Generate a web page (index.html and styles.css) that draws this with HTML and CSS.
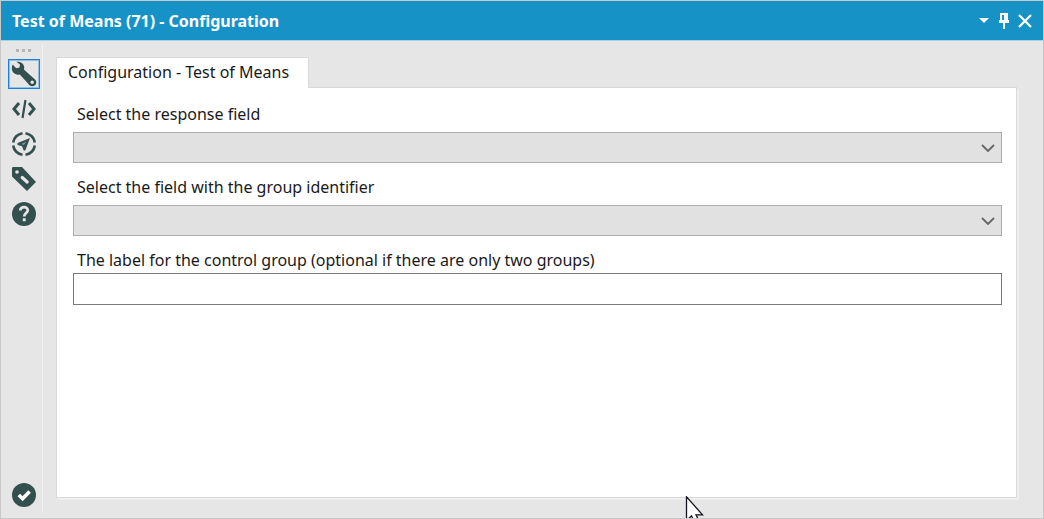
FILE: index.html
```html
<!DOCTYPE html>
<html lang="en">
<head>
<meta charset="utf-8">
<title>Test of Means (71) - Configuration</title>
<link rel="stylesheet" href="styles.css">
</head>
<body>
<div class="window">
  <header class="titlebar">
    <h1 class="title">Test of Means (71) - Configuration</h1>
    <button class="title-button" aria-label="Window options"><svg width="16" height="20" viewBox="0 0 16 20"><path d="M3 7h10l-5 5z" fill="#fff"/></svg></button>
    <button class="title-button title-pin" aria-label="Pin"><svg width="16" height="20" viewBox="0 0 16 20"><path d="M4 2h8v7h1v3H9v6H7v-6H3V9h1z" fill="#fff"/><path d="M6 4h2v5H6z" fill="#1792c7"/></svg></button>
    <button class="title-button title-close" aria-label="Close"><svg width="16" height="20" viewBox="0 0 16 20"><path d="M2 4l12 12M14 4L2 16" stroke="#fff" stroke-width="2.2" fill="none"/></svg></button>
  </header>
  <div class="content">
    <nav class="rail" aria-label="Configuration sections">
      <div class="grip"><i></i><i></i><i></i></div>
      <button class="tool tool-active" aria-label="Configuration"><svg width="26" height="26" viewBox="0 0 26 26"><path d="M1.600 3.400 5.200 7.200 8.500 6.500 9 3.600 5.400.7C9.500.2 12.900 2.500 13.200 6c.1 1 0 1.800-.3 2.600l9.700 8.700c1.700 1.300 2.800 2.400 2.700 4.200-.1 2.300-1.900 3.800-4.100 3.800-1.800 0-2.900-1-4.200-2.700L8.800 13.400C4.500 14.500.9 11.500.8 7.600c0-1.500.3-2.900.8-4.200z" fill="#33504f"/><circle cx="21.200" cy="21.200" r="1.700" fill="#e6e6e6"/></svg></button>
      <button class="tool" aria-label="XML view"><svg width="26" height="26" viewBox="0 0 26 26"><path d="M8 7 3 13l5 6M18 7l5 6-5 6" fill="none" stroke="#33504f" stroke-width="3"/><path d="M14.500 4 11.500 22" stroke="#33504f" stroke-width="2.200"/></svg></button>
      <button class="tool" aria-label="Navigation"><svg width="26" height="26" viewBox="0 0 26 26"><g fill="none" stroke="#33504f" stroke-width="2.600"><path d="M14.500 2.200A10.800 10.800 0 0 1 23.800 11.500M23.800 14.500A10.800 10.800 0 0 1 14.500 23.800M11.500 23.800A10.800 10.800 0 0 1 2.200 14.500M2.200 11.500A10.800 10.800 0 0 1 11.500 2.200"/></g><path d="M19 7 6.500 12v2l4.500 1.200 1.700 4.300h1.600z" fill="#33504f"/><path d="M15.500 10.500 10.500 13l2.300 1z" fill="#e6e6e6" opacity=".5"/></svg></button>
      <button class="tool" aria-label="Annotation"><svg width="26" height="26" viewBox="0 0 26 26"><path d="M1 2.200Q1 1 2.200 1H11L25 16 16 25 1 10.500z" fill="#33504f"/><circle cx="6" cy="6" r="1.800" fill="#e6e6e6"/><path d="m11.200 11.500 5 4.500" stroke="#e6e6e6" stroke-width="3.200" stroke-linecap="round"/></svg></button>
      <button class="tool" aria-label="Help"><svg width="26" height="26" viewBox="0 0 26 26"><circle cx="13" cy="13" r="12" fill="#33504f"/><path d="M9.300 9.400C9.300 5 17 5 16.700 9.500c-.2 2.600-3.500 2.600-3.500 6" fill="none" stroke="#e6e6e6" stroke-width="2.800"/><path d="M11.800 17.300h2.900v2.900h-2.900z" fill="#e6e6e6"/></svg></button>
      <button class="tool tool-apply" aria-label="Apply"><svg width="26" height="26" viewBox="0 0 26 26"><circle cx="13" cy="13" r="12" fill="#33504f"/><path d="m7.800 13 3.800 3.700 7-7.200" fill="none" stroke="#fff" stroke-width="3.600"/></svg></button>
    </nav>
    <main class="main">
      <div class="tabs" role="tablist"><button class="tab" role="tab" aria-selected="true">Configuration - Test of Means</button></div>
      <form class="panel">
        <div class="field">
          <label class="label" for="response">Select the response field</label>
          <div class="select-box">
            <select class="control select" id="response"></select>
            <svg class="chevron" width="14" height="10" viewBox="0 0 14 10"><path d="m1 2 6 6 6-6" fill="none" stroke="#666" stroke-width="1.800"/></svg>
          </div>
        </div>
        <div class="field">
          <label class="label" for="group">Select the field with the group identifier</label>
          <div class="select-box">
            <select class="control select" id="group"></select>
            <svg class="chevron" width="14" height="10" viewBox="0 0 14 10"><path d="m1 2 6 6 6-6" fill="none" stroke="#666" stroke-width="1.800"/></svg>
          </div>
        </div>
        <div class="field field-text">
          <label class="label" for="control-label">The label for the control group (optional if there are only two groups)</label>
          <input class="control text" id="control-label" type="text">
        </div>
      </form>
    </main>
  </div>
  <svg class="pointer" width="20" height="23" viewBox="0 0 20 23"><path d="M1.500.8v24l5-5 4 8 4-2-3.500-7h6.500z" fill="#fff" stroke="#15151f" stroke-width="1.300"/></svg>
</div>
</body>
</html>
```

FILE: styles.css
```css
* {
  box-sizing: border-box;
}

body {
  margin: 0;
  font: 16px/22px "Noto Sans", "Open Sans", sans-serif;
  color: #1a1a1a;
}

button {
  padding: 0;
  border: 0;
  background: none;
  font: inherit;
  color: inherit;
}

svg {
  display: block;
}

.window {
  position: relative;
  display: flex;
  flex-direction: column;
  height: 100vh;
  overflow: hidden;
  border: 1px solid #c8c8c8;
  background: #e6e6e6;
}

.titlebar {
  display: flex;
  align-items: center;
  height: 40px;
  padding: 0 10px 0 11px;
  border-bottom: 1px solid #a9d0e2;
  background: #1792c7;
  color: #fff;
}

.title {
  flex: 1;
  margin: 0;
  font-size: 16px;
  font-weight: 700;
}

.title-pin {
  margin-left: 4px;
}

.title-close {
  margin-left: 5px;
}

.content {
  display: flex;
  flex: 1;
  min-height: 0;
}

.rail {
  display: flex;
  flex-direction: column;
  align-items: center;
  gap: 5px;
  width: 42px;
  margin: 4px 0 5px;
  padding: 0 0 3px 4px;
  border-right: 1px solid #f4f4f4;
}

.grip {
  display: flex;
  gap: 3px;
  height: 9px;
  padding-top: 4px;
}

.grip i {
  width: 3px;
  height: 3px;
  background: #b5b5b5;
}

.tool {
  display: flex;
  align-items: center;
  justify-content: center;
  width: 32px;
  height: 30px;
}

.tool-active {
  border: 1px solid #1a80d9;
  outline: 1px solid #8fc0ec;
  outline-offset: -2px;
}

.tool-apply {
  margin-top: auto;
}

.main {
  display: flex;
  flex: 1;
  flex-direction: column;
  padding: 16px 26px 20px 13px;
}

.tabs {
  display: flex;
}

.tab {
  position: relative;
  height: 31px;
  margin-bottom: -1px;
  padding: 0 19px 2px 11px;
  border: 1px solid #d9d9d9;
  border-bottom: 0;
  background: #fff;
}

.panel {
  flex: 1;
  padding: 15px 14px 15px 16px;
  border: 1px solid #d9d9d9;
  background: #fff;
  box-shadow: 2px 2px 0 #efefef;
}

.field {
  margin-bottom: 13px;
}

.label {
  display: block;
  height: 29px;
  padding-left: 4px;
}

.field-text .label {
  height: 24px;
}

.control {
  display: block;
  width: 100%;
  height: 31px;
  border: 1px solid #adadad;
  border-radius: 0;
  font: inherit;
}

.select-box {
  position: relative;
}

.select {
  appearance: none;
  background: #e1e1e1;
}

.chevron {
  position: absolute;
  right: 7px;
  top: 11px;
  pointer-events: none;
}

.text {
  height: 32px;
  border-color: #7a7a7a;
  background: #fff;
}

.pointer {
  position: absolute;
  left: 684px;
  bottom: -1px;
}
```
